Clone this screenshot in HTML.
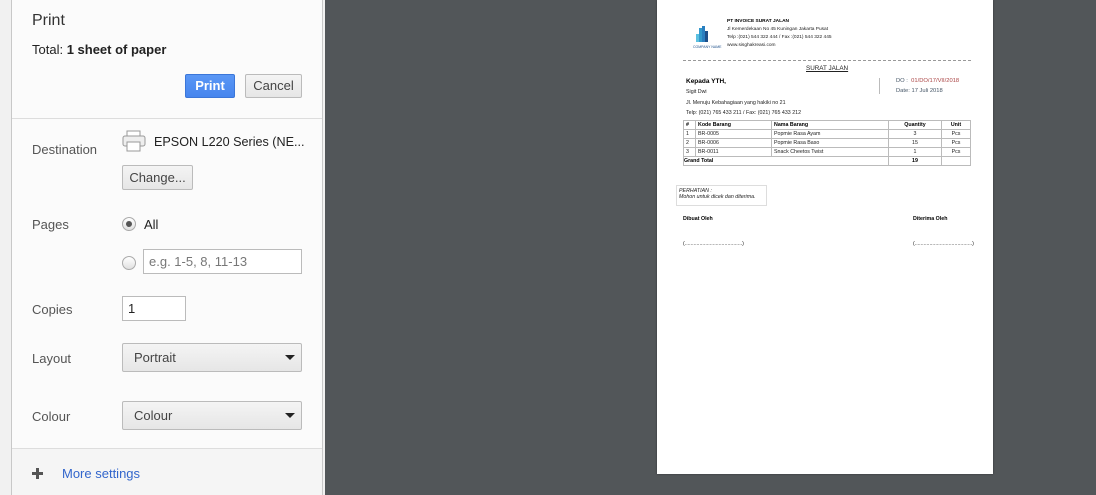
<!DOCTYPE html>
<html><head><style>
*{margin:0;padding:0;box-sizing:border-box}
body{width:1096px;height:495px;overflow:hidden;background:#525659;font-family:"Liberation Sans",sans-serif;position:relative}
.a{position:absolute}
#side{left:0;top:0;width:325px;height:495px;background:#f1f1f1}
#panel{left:11px;top:0;width:312px;height:495px;background:#fbfbfb;border-left:1px solid #c8c8c8;border-right:1px solid #c8c8c8}
.lbl{font-size:13px;color:#555}
.btn{border:1px solid #bbb;border-radius:2px;background:linear-gradient(#f4f4f4,#e6e6e6);font-size:13px;color:#444;text-align:center}
.sel{border:1px solid #bbb;border-radius:2px;background:linear-gradient(#f4f4f4,#e6e6e6);font-size:13px;color:#444;padding-left:11px;line-height:27px;height:29px}
.sel:after{content:"";position:absolute;right:6px;top:11px;border:5px solid transparent;border-top:5px solid #222;border-bottom:0;width:0;height:0}
.inp{border:1px solid #bbb;background:#fff;font-size:13px;padding-left:5px;line-height:23px;height:25px}
.radio{width:14px;height:14px;border-radius:50%;border:1px solid #aaa;background:linear-gradient(#fff,#e0e0e0)}
#page{left:657px;top:0;width:336px;height:474px;background:#fff;box-shadow:0 0 2px rgba(0,0,0,.4)}
.p{position:absolute;font-size:5.3px;color:#222;white-space:nowrap}
.b{font-weight:bold;color:#000}
table{border-collapse:collapse;font-size:5.3px;color:#222}
td{border:1px solid #bbb;height:9px;padding:0 2px;white-space:nowrap}
</style></head><body>
<div id="side" class="a"></div>
<div id="panel" class="a">
 <div class="a" style="left:0;top:118px;width:310px;border-top:1px solid #ddd"></div>
 <div class="a" style="left:0;top:448px;width:310px;height:47px;background:#f5f5f5;border-top:1px solid #ddd"></div>
</div>
<div class="a" style="left:32px;top:12px;font-size:16px;color:#333">Print</div>
<div class="a" style="left:32px;top:42px;font-size:13px;color:#222">Total: <b>1 sheet of paper</b></div>
<div class="a" style="left:185px;top:74px;width:50px;height:24px;background:linear-gradient(#5a97f5,#4685ee);border:1px solid #3b76d8;border-radius:2px;color:#fff;font-weight:bold;font-size:13px;text-align:center;line-height:22px">Print</div>
<div class="a btn" style="left:245px;top:74px;width:57px;height:24px;line-height:22px">Cancel</div>
<div class="a lbl" style="left:32px;top:142px">Destination</div>
<svg class="a" style="left:122px;top:130px" width="24" height="22" viewBox="0 0 24 22"><rect x="5" y="1" width="13" height="6" fill="#fff" stroke="#999"/><rect x="1" y="6" width="22" height="10" rx="2" fill="#eee" stroke="#999"/><rect x="5" y="12" width="13" height="9" fill="#fff" stroke="#999"/></svg>
<div class="a" style="left:154px;top:135px;font-size:12.6px;color:#222">EPSON L220 Series (NE...</div>
<div class="a btn" style="left:122px;top:165px;width:71px;height:25px;line-height:23px">Change...</div>
<div class="a lbl" style="left:32px;top:217px">Pages</div>
<div class="a radio" style="left:122px;top:217px"></div><div class="a" style="left:126px;top:221px;width:6px;height:6px;border-radius:50%;background:#555"></div>
<div class="a" style="left:144px;top:217px;font-size:13px;color:#222">All</div>
<div class="a radio" style="left:122px;top:256px"></div>
<div class="a inp" style="left:143px;top:249px;width:159px;color:#777">e.g. 1-5, 8, 11-13</div>
<div class="a lbl" style="left:32px;top:302px">Copies</div>
<div class="a inp" style="left:122px;top:296px;width:64px;color:#222">1</div>
<div class="a lbl" style="left:32px;top:351px">Layout</div>
<div class="a sel" style="left:122px;top:343px;width:180px">Portrait</div>
<div class="a lbl" style="left:32px;top:409px">Colour</div>
<div class="a sel" style="left:122px;top:401px;width:180px">Colour</div>
<div class="a" style="left:32px;top:472px;width:11px;height:3px;background:#555"></div>
<div class="a" style="left:36px;top:468px;width:3px;height:11px;background:#555"></div>
<div class="a" style="left:62px;top:466px;font-size:13px;color:#3366cc">More settings</div>

<div id="page" class="a">
 <svg class="p" style="left:36px;top:25px" width="20" height="20" viewBox="0 0 20 20"><rect x="6" y="3" width="3" height="14" fill="#39c"/><rect x="9" y="1" width="3" height="16" fill="#2a7fc0"/><rect x="12" y="6" width="3" height="11" fill="#1d4f8a"/><rect x="3" y="9" width="3" height="8" fill="#5bc0e0"/></svg>
 <div class="p" style="left:36px;top:45px;font-size:3.5px;color:#1d4f8a">COMPANY NAME</div>
 <div class="p b" style="left:70px;top:19px;font-size:4.8px">PT INVOICE SURAT JALAN</div>
 <div class="p" style="left:70px;top:27px;font-size:4.8px">Jl Kemerdekaan No 45 Kuningan Jakarta Pusat</div>
 <div class="p" style="left:70px;top:35px;font-size:4.8px">Telp :(021) 544 322 444 / Fax :(021) 544 322 445</div>
 <div class="p" style="left:70px;top:43px;font-size:4.8px">www.sisghakreasi.com</div>
 <div class="p" style="left:26px;top:60px;width:288px;border-top:1px dashed #999"></div>
 <div class="p" style="left:149px;top:65px;font-size:6.3px;text-decoration:underline;color:#222">SURAT JALAN</div>
 <div class="p b" style="left:29px;top:78px;font-size:6.5px">Kepada YTH,</div>
 <div class="p" style="left:29px;top:89px">Sigit Dwi</div>
 <div class="p" style="left:29px;top:100px">Jl. Menuju Kebahagiaan yang hakiki no 21</div>
 <div class="p" style="left:29px;top:110px">Telp: (021) 765 433 211 / Fax: (021) 765 433 212</div>
 <div class="p" style="left:222px;top:78px;height:16px;border-left:1px solid #bbb"></div>
 <div class="p" style="left:239px;top:78px;color:#456;font-size:5.8px">DO : &nbsp;<span style="color:#a44">01/DO/17/VII/2018</span></div>
 <div class="p" style="left:239px;top:88px;color:#456;font-size:5.8px">Date: 17 Juli 2018</div>
 <table class="p" style="left:26px;top:120px;width:288px">
  <tr class="b"><td style="width:12px">#</td><td style="width:76px">Kode Barang</td><td style="width:117px">Nama Barang</td><td style="width:53px;text-align:center">Quantity</td><td style="text-align:center">Unit</td></tr>
  <tr><td>1</td><td>BR-0005</td><td>Popmie Rasa Ayam</td><td style="text-align:center">3</td><td style="text-align:center">Pcs</td></tr>
  <tr><td>2</td><td>BR-0006</td><td>Popmie Rasa Baso</td><td style="text-align:center">15</td><td style="text-align:center">Pcs</td></tr>
  <tr><td>3</td><td>BR-0011</td><td>Snack Cheetos Twist</td><td style="text-align:center">1</td><td style="text-align:center">Pcs</td></tr>
  <tr class="b"><td colspan="3" style="padding:0">Grand Total</td><td style="text-align:center">19</td><td></td></tr>
 </table>
 <div class="p" style="left:19px;top:185px;width:91px;height:21px;border:1px solid #ddd;font-style:italic;padding:2px">PERHATIAN :<br>Mohon untuk dicek dan diterima.</div>
 <div class="p b" style="left:26px;top:216px">Dibuat Oleh</div>
 <div class="p b" style="left:256px;top:216px">Diterima Oleh</div>
 <div class="p" style="left:26px;top:241px">(.......................................)</div>
 <div class="p" style="left:256px;top:241px">(.......................................)</div>
</div>
</body></html>
